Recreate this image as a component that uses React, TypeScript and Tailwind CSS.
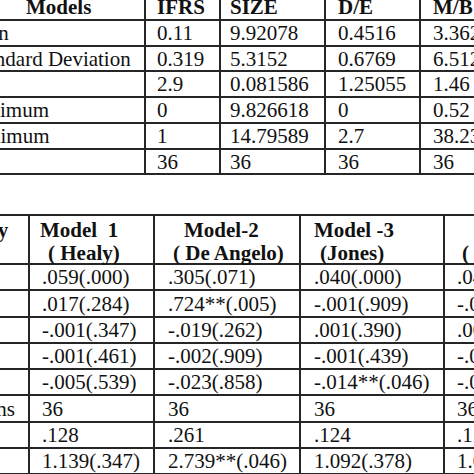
import React from "react";

const cell = "flex items-center whitespace-nowrap bg-white";

const topRows: { label: string; pl: string; v: string[] }[] = [
  { label: "Mean", pl: "pl-[11px]", v: ["0.11", "9.92078", "0.4516", "3.362"] },
  { label: "Standard Deviation", pl: "pl-[18px]", v: ["0.319", "5.3152", "0.6769", "6.512"] },
  { label: "", pl: "pl-[12px]", v: ["2.9", "0.081586", "1.25055", "1.46"] },
  { label: "Minimum", pl: "pl-[15px]", v: ["0", "9.826618", "0", "0.52"] },
  { label: "Maximum", pl: "pl-[12px]", v: ["1", "14.79589", "2.7", "38.23"] },
  { label: "N", pl: "pl-[12px]", v: ["36", "36", "36", "36"] },
];

const topPl = ["pl-[11px]", "pl-[9px]", "pl-[12px]", "pl-[12px]"];

const botRows: { label: string; v: string[] }[] = [
  { label: "Constant", v: [".059(.000)", ".305(.071)", ".040(.000)", ".042(.000)"] },
  { label: "IFRS", v: [".017(.284)", ".724**(.005)", "-.001(.909)", "-.002(.611)"] },
  { label: "SIZE", v: ["-.001(.347)", "-.019(.262)", ".001(.390)", ".001(.512)"] },
  { label: "D/E", v: ["-.001(.461)", "-.002(.909)", "-.001(.439)", "-.001(.470)"] },
  { label: "M/B", v: ["-.005(.539)", "-.023(.858)", "-.014**(.046)", "-.012(.071)"] },
  { label: "Observations", v: ["36", "36", "36", "36"] },
  { label: "R²", v: [".128", ".261", ".124", ".117"] },
  { label: "F", v: ["1.139(.347)", "2.739**(.046)", "1.092(.378)", "1.034(.410)"] },
];

const botPl = ["pl-[12px]", "pl-[13px]", "pl-[13px]", "pl-[12px]"];

const headCell = "flex flex-col pt-[3px] whitespace-pre bg-white font-bold leading-[23px]";

export default function App() {
  return (
    <div className="w-[474px] h-[474px] overflow-hidden bg-white text-[#111] text-[21px] leading-[22px] font-['Liberation_Serif','Times_New_Roman',serif]">
      {/* Top table: descriptive statistics */}
      <div className="-ml-[50px] -mt-[6px] w-[600px] bg-[#262626] pb-[2px] grid gap-[2px] grid-cols-[194px_73px_103px_93px_131px] grid-rows-[25px_24px_23px_24px_24px_24px_23px]">
        <div className={`${cell} font-bold pl-[76px]`}>Models</div>
        <div className={`${cell} font-bold pl-[11px]`}>IFRS</div>
        <div className={`${cell} font-bold pl-[9px]`}>SIZE</div>
        <div className={`${cell} font-bold pl-[12px]`}>D/E</div>
        <div className={`${cell} font-bold pl-[12px]`}>M/B</div>
        {topRows.map((r, i) => (
          <React.Fragment key={i}>
            <div className={`${cell} ${r.pl}`}>{r.label}</div>
            {r.v.map((v, j) => (
              <div key={j} className={`${cell} ${topPl[j]}`}>
                {v}
              </div>
            ))}
          </React.Fragment>
        ))}
      </div>

      {/* Bottom table: regression models */}
      <div className="mt-[39px] -ml-[100px] w-[680px] bg-[#262626] py-[2px] grid gap-[2px] grid-cols-[128px_123px_144px_142px_131px] grid-rows-[47px_24px_25px_24px_24px_24px_25px_24px_24px]">
        <div className={`${headCell} pl-[55px]`}>
          <span>Proxy</span>
        </div>
        <div className={headCell}>
          <span className="pl-[10px]">{"Model  1"}</span>
          <span className="pl-[18px]">( Healy)</span>
        </div>
        <div className={headCell}>
          <span className="pl-[29px]">Model-2</span>
          <span className="pl-[18px]">( De Angelo)</span>
        </div>
        <div className={headCell}>
          <span className="pl-[13px]">Model -3</span>
          <span className="pl-[19px]">(Jones)</span>
        </div>
        <div className={headCell}>
          <span className="pl-[40px]">Model-4</span>
          <span className="pl-[17px]">( Kothari)</span>
        </div>
        {botRows.map((r, i) => (
          <React.Fragment key={i}>
            <div className={`${cell} pl-[4px]`}>{r.label}</div>
            {r.v.map((v, j) => (
              <div key={j} className={`${cell} ${botPl[j]}`}>
                {v}
              </div>
            ))}
          </React.Fragment>
        ))}
      </div>
    </div>
  );
}
